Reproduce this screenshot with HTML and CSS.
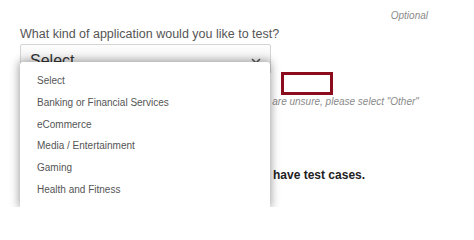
FILE: index.html
```html
<!DOCTYPE html>
<html lang="en">
<head>
<meta charset="utf-8">
<title>Application type</title>
<link rel="stylesheet" href="styles.css">
</head>
<body>
<div class="page">
  <div class="optional">Optional</div>
  <div class="label">What kind of application would you like to test?</div>
  <div class="select-box">
    <span class="select-value">Select</span>
    <svg class="chevron" width="10" height="6" viewBox="0 0 10 6"><path d="M1 1 L5 5 L9 1" fill="none" stroke="#555" stroke-width="1.6"/></svg>
  </div>
  <div class="marker-row"><div class="marker"></div></div>
  <div class="hint">If you are unsure, please select "Other"</div>
  <div class="bold-line">have test cases.</div>

  <ul class="dropdown">
    <li>Select</li>
    <li>Banking or Financial Services</li>
    <li>eCommerce</li>
    <li>Media / Entertainment</li>
    <li>Gaming</li>
    <li>Health and Fitness</li>
  </ul>
</div>
</body>
</html>
```
FILE: styles.css
```css
html, body {
  margin: 0;
  padding: 0;
  background: #fff;
  overflow: hidden;
}
body {
  font-family: "Liberation Sans", Arial, sans-serif;
  width: 474px;
  height: 207px;
}
.page {
  position: relative;
  padding: 9px 46px 0 20px;
  height: 198px;
}
.optional {
  text-align: right;
  font-style: italic;
  font-size: 10px;
  line-height: 13px;
  color: #8a8a8a;
}
.label {
  margin-top: 4px;
  font-size: 12.5px;
  line-height: 16px;
  color: #555;
}
.select-box {
  margin-top: 2px;
  width: 251px;
  height: 30px;
  border: 1px solid #d4d4d4;
  border-radius: 2px;
  background: linear-gradient(#fdfdfd, #ececec);
  display: flex;
  align-items: center;
  justify-content: space-between;
  padding: 0 9px 0 9px;
  box-sizing: border-box;
}
.select-value {
  font-size: 16px;
  color: #333;
  margin-top: 4px;
}
.chevron {
  margin-top: 3px;
}
.marker-row {
  margin-top: -2px;
  padding-left: 261px;
}
.marker {
  width: 46px;
  height: 17px;
  border: 3px solid #8b0c1c;
}
.hint {
  margin-top: 0;
  font-size: 10px;
  line-height: 13px;
  font-style: italic;
  color: #8a8a8a;
  padding-left: 225px;
}
.bold-line {
  margin-top: 60px;
  padding-left: 253px;
  font-size: 12px;
  line-height: 14px;
  font-weight: bold;
  color: #222;
}
.dropdown {
  position: absolute;
  left: 20px;
  top: 62px;
  width: 250px;
  height: 145px;
  margin: 0;
  padding: 8px 0 0 0;
  list-style: none;
  background: #fff;
  border-radius: 3px 3px 0 0;
  box-shadow: 0 0 10px 1px rgba(0,0,0,0.38);
  box-sizing: border-box;
  overflow: hidden;
}
.dropdown li {
  height: 21.8px;
  line-height: 21.8px;
  padding-left: 17px;
  font-size: 10px;
  color: #555;
}
```
